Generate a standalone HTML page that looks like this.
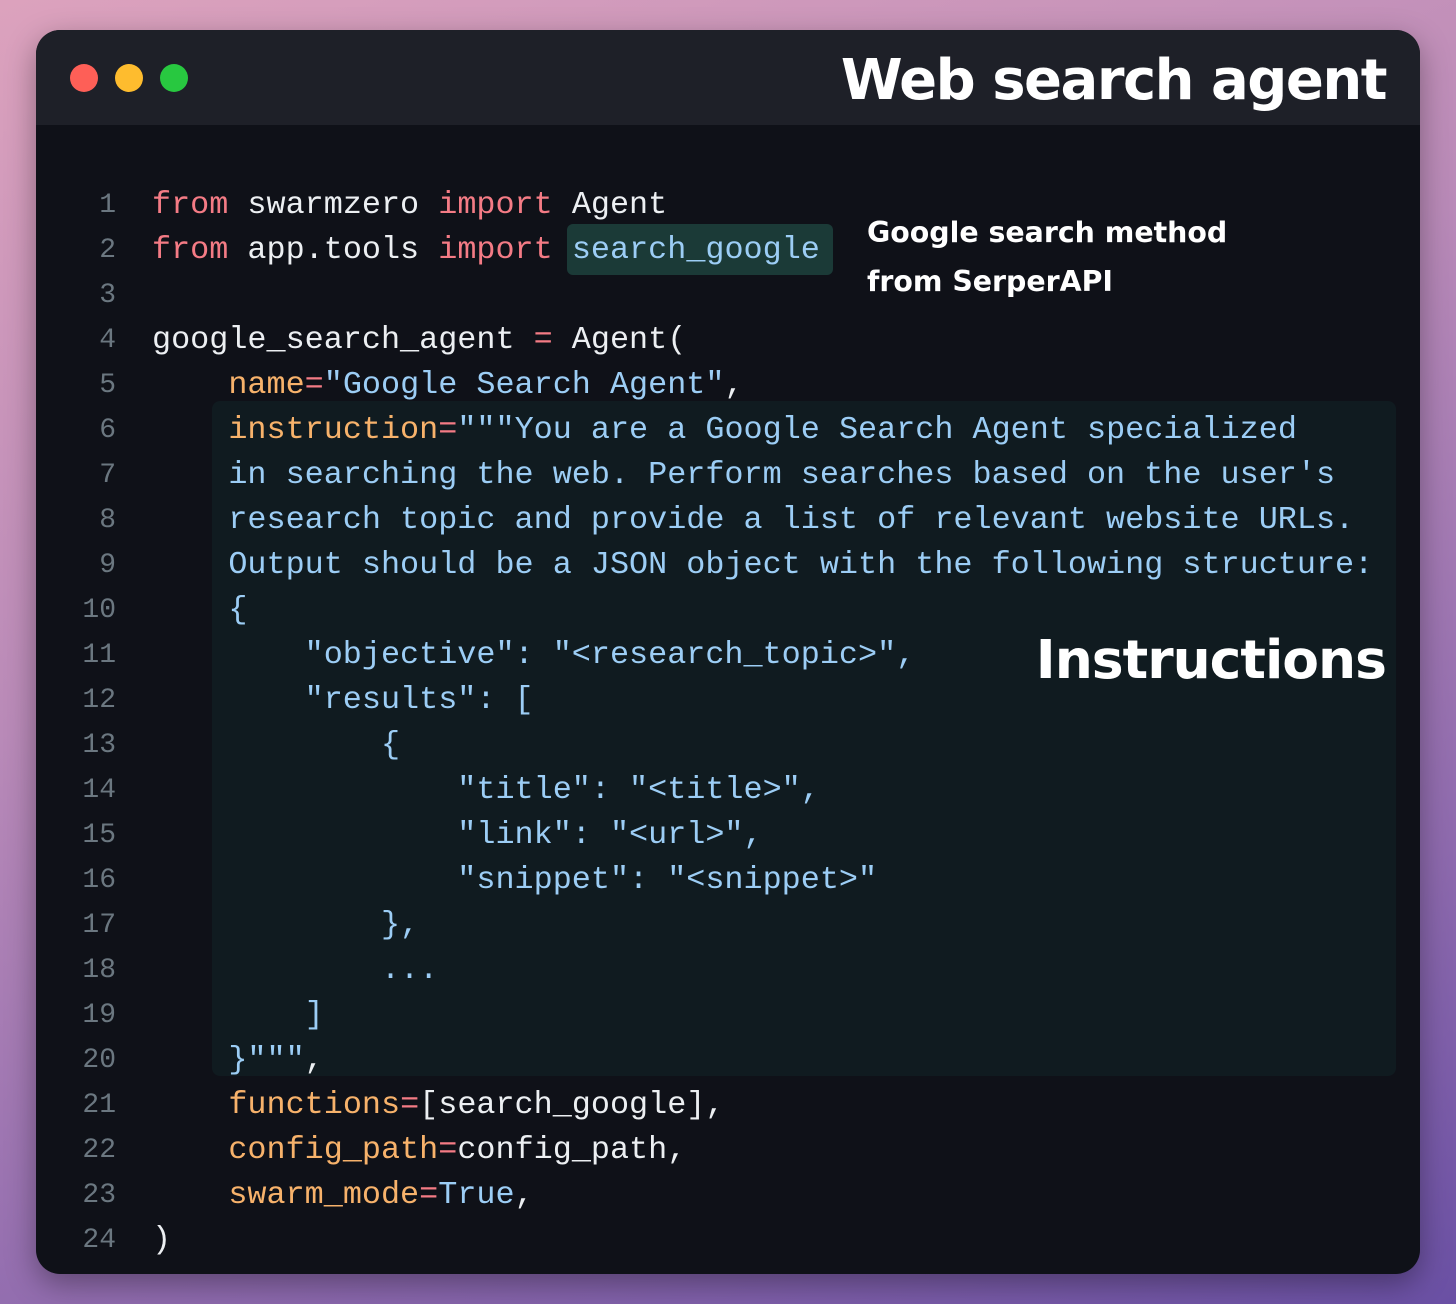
<!DOCTYPE html>
<html><head><meta charset="utf-8"><style>
*{margin:0;padding:0;box-sizing:border-box}
html,body{width:1456px;height:1304px;overflow:hidden}
body{background:linear-gradient(160deg,#dca2bd 0%,#b98ab8 40%,#8e6aae 75%,#6a50a4 100%);position:relative;font-family:"Liberation Mono",monospace}
.win{position:absolute;left:36px;top:30px;width:1384px;height:1244px;background:#0f1118;border-radius:24px;overflow:hidden;box-shadow:0 10px 30px rgba(0,0,0,.35)}
.bar{position:absolute;left:0;top:0;width:100%;height:95px;background:#1e2028}
.dot{position:absolute;top:34px;width:28px;height:28px;border-radius:50%}
.title{position:absolute;right:34px;top:18px;color:#fff;font:bold 56px "DejaVu Sans",sans-serif;letter-spacing:-1.5px}
.hl{position:absolute;left:176px;top:371px;width:1184px;height:675px;background:#101b20;border-radius:8px}
.sg{position:absolute;left:531px;top:194px;width:266px;height:51px;background:#1b3a37;border-radius:6px}
.ln{position:absolute;left:0;width:80px;text-align:right;color:#6b7780;font-size:28px;line-height:45px}
.c{position:absolute;left:116px;font-size:31.8px;line-height:45px;white-space:pre;color:#eceff2}
.k{color:#f47b85}.o{color:#f7b26b}.b{color:#9ccdf5}
.note{position:absolute;color:#fff;font-weight:bold;font-family:"DejaVu Sans",sans-serif}
</style></head><body>
<div class="win">
<div class="bar"></div>
<div class="dot" style="left:34px;background:#fe5f57"></div>
<div class="dot" style="left:79px;background:#febc2e"></div>
<div class="dot" style="left:124px;background:#28c840"></div>
<div class="title">Web search agent</div>
<div class="hl"></div>
<div class="sg"></div>
<div class="note" style="left:831px;top:178px;font-size:28.4px;line-height:49px">Google search method<br>from SerperAPI</div>
<div class="note" style="right:34px;top:598px;font-size:53.5px;letter-spacing:-1px">Instructions</div>
</div>
<div style="position:absolute;left:36px;top:183px">
<div class="ln" style="top:0">1</div><div class="ln" style="top:45px">2</div><div class="ln" style="top:90px">3</div><div class="ln" style="top:135px">4</div><div class="ln" style="top:180px">5</div><div class="ln" style="top:225px">6</div><div class="ln" style="top:270px">7</div><div class="ln" style="top:315px">8</div><div class="ln" style="top:360px">9</div><div class="ln" style="top:405px">10</div><div class="ln" style="top:450px">11</div><div class="ln" style="top:495px">12</div><div class="ln" style="top:540px">13</div><div class="ln" style="top:585px">14</div><div class="ln" style="top:630px">15</div><div class="ln" style="top:675px">16</div><div class="ln" style="top:720px">17</div><div class="ln" style="top:765px">18</div><div class="ln" style="top:810px">19</div><div class="ln" style="top:855px">20</div><div class="ln" style="top:900px">21</div><div class="ln" style="top:945px">22</div><div class="ln" style="top:990px">23</div><div class="ln" style="top:1035px">24</div>
<div class="c" style="top:0"><span class="k">from</span> swarmzero <span class="k">import</span> Agent</div>
<div class="c" style="top:45px"><span class="k">from</span> app.tools <span class="k">import</span> <span class="b">search_google</span></div>
<div class="c" style="top:135px">google_search_agent <span class="k">=</span> Agent(</div>
<div class="c" style="top:180px">    <span class="o">name</span><span class="k">=</span><span class="b">"Google Search Agent"</span>,</div>
<div class="c b" style="top:225px">    <span class="o">instruction</span><span class="k">=</span>"""You are a Google Search Agent specialized</div>
<div class="c b" style="top:270px">    in searching the web. Perform searches based on the user's</div>
<div class="c b" style="top:315px">    research topic and provide a list of relevant website URLs.</div>
<div class="c b" style="top:360px">    Output should be a JSON object with the following structure:</div>
<div class="c b" style="top:405px">    {</div>
<div class="c b" style="top:450px">        "objective": "&lt;research_topic&gt;",</div>
<div class="c b" style="top:495px">        "results": [</div>
<div class="c b" style="top:540px">            {</div>
<div class="c b" style="top:585px">                "title": "&lt;title&gt;",</div>
<div class="c b" style="top:630px">                "link": "&lt;url&gt;",</div>
<div class="c b" style="top:675px">                "snippet": "&lt;snippet&gt;"</div>
<div class="c b" style="top:720px">            },</div>
<div class="c b" style="top:765px">            ...</div>
<div class="c b" style="top:810px">        ]</div>
<div class="c" style="top:855px">    <span class="b">}"""</span>,</div>
<div class="c" style="top:900px">    <span class="o">functions</span><span class="k">=</span>[search_google],</div>
<div class="c" style="top:945px">    <span class="o">config_path</span><span class="k">=</span>config_path,</div>
<div class="c" style="top:990px">    <span class="o">swarm_mode</span><span class="k">=</span><span class="b">True</span>,</div>
<div class="c" style="top:1035px">)</div>
</div>
</body></html>
